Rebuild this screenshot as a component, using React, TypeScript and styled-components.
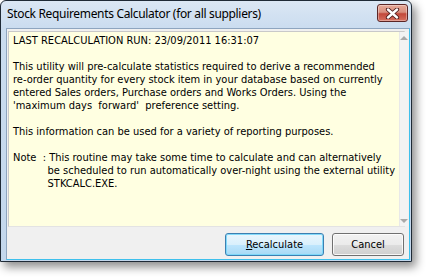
import React from 'react';
import styled, { createGlobalStyle } from 'styled-components';

const GlobalStyle = createGlobalStyle`
  html, body {
    margin: 0;
    padding: 0;
    background: #ffffff;
  }
`;

const Page = styled.div`
  width: 427px;
  height: 279px;
  overflow: hidden;
`;

const Window = styled.div`
  width: 412px;
  height: 262px;
  box-sizing: border-box;
  display: flex;
  flex-direction: column;
  border: 1px solid #1f2a36;
  border-radius: 6px 6px 0 0;
  padding: 0 1px 1px 5px;
  background: linear-gradient(to bottom, #dbe7f4 0px, #cadcef 28px, #c3d7ec 100%);
  box-shadow: 4px 5px 10px rgba(0, 0, 0, 0.45);
`;

const TitleBar = styled.div`
  height: 27px;
  display: flex;
  align-items: center;
  justify-content: space-between;
  flex-shrink: 0;
`;

const Title = styled.div`
  font-family: 'Noto Sans', 'Open Sans', sans-serif;
  font-size: 12px;
  letter-spacing: -0.33px;
  color: #000;
  padding-left: 1px;
  margin-top: -2px;
`;

const CloseButton = styled.div`
  width: 29px;
  height: 16px;
  margin-right: 2px;
  margin-top: -3px;
  border: 1px solid #5b2626;
  border-radius: 3px;
  display: flex;
  align-items: center;
  justify-content: center;
  background: linear-gradient(to bottom, #e6a999 0%, #d88f7e 45%, #c2483a 55%, #d6705f 100%);
  box-shadow: inset 0 0 0 1px rgba(255, 255, 255, 0.35);
`;

const Client = styled.div`
  flex: 1;
  display: flex;
  flex-direction: column;
  background: #f0f0f0;
  border: 1px solid #8ea5bf;
  border-right-color: #3ec0ec;
  border-bottom-color: #3ec0ec;
  padding: 2px 4px 0 1px;
`;

const Memo = styled.div`
  height: 196px;
  box-sizing: border-box;
  display: flex;
  background: #ffffe1;
  border: 1px solid #c9c9c9;
  border-right-color: #e3e3e3;
  border-bottom-color: #e3e3e3;
`;

const MemoText = styled.div`
  flex: 1;
  padding: 2px 4px 0 4px;
  font-family: 'DejaVu Sans Condensed', 'DejaVu Sans', sans-serif;
  font-size: 11px;
  line-height: 13px;
  color: #000;
  white-space: pre;
`;

const ScrollBar = styled.div`
  width: 16px;
  display: flex;
  flex-direction: column;
  justify-content: space-between;
  align-items: center;
  background: #f3f3f3;
  border-left: 1px solid #e8e8e8;
  padding: 4px 0 3px;
`;

const Arrow = styled.div<{ $down?: boolean }>`
  width: 0;
  height: 0;
  border-left: 4px solid transparent;
  border-right: 4px solid transparent;
  ${(p) => (p.$down ? 'border-top: 4px solid #a9a9a9;' : 'border-bottom: 4px solid #a9a9a9;')}
`;

const ButtonRow = styled.div`
  display: flex;
  justify-content: flex-end;
  gap: 8px;
  margin-top: 6px;
  padding-right: 1px;
`;

const Button = styled.div<{ $default?: boolean; $width: number }>`
  width: ${(p) => p.$width}px;
  height: 23px;
  box-sizing: border-box;
  display: flex;
  align-items: center;
  justify-content: center;
  border-radius: 3px;
  font-family: 'DejaVu Sans Condensed', 'DejaVu Sans', sans-serif;
  font-size: 11px;
  color: #000;
  border: 1px solid ${(p) => (p.$default ? '#3c7fb1' : '#707070')};
  background: ${(p) =>
    p.$default
      ? 'linear-gradient(to bottom, #eaf6fd 0%, #d9f0fc 50%, #bee6fd 51%, #a7d9f5 100%)'
      : 'linear-gradient(to bottom, #f2f2f2 0%, #ebebeb 50%, #dddddd 51%, #cfcfcf 100%)'};
  box-shadow: inset 0 0 0 1px
    ${(p) => (p.$default ? 'rgba(120, 215, 250, 0.9)' : 'rgba(255, 255, 255, 0.8)')};

  u {
    text-decoration: underline;
  }
`;

const memo = `LAST RECALCULATION RUN: 23/09/2011 16:31:07

This utility will pre-calculate statistics required to derive a recommended
re-order quantity for every stock item in your database based on currently
entered Sales orders, Purchase orders and Works Orders. Using the
'maximum days  forward'  preference setting.

This information can be used for a variety of reporting purposes.

Note  : This routine may take some time to calculate and can alternatively
           be scheduled to run automatically over-night using the external utility
           STKCALC.EXE.`;

export default function App() {
  return (
    <Page>
      <GlobalStyle />
      <Window>
        <TitleBar>
          <Title>Stock Requirements Calculator (for all suppliers)</Title>
          <CloseButton>
            <svg width="15" height="11" viewBox="0 0 15 11">
              <path d="M3 1.5 L12 9.5 M12 1.5 L3 9.5" stroke="#4a1a1a" strokeWidth="4.2" strokeLinecap="round" />
              <path d="M3 1.5 L12 9.5 M12 1.5 L3 9.5" stroke="#ffffff" strokeWidth="2.4" strokeLinecap="round" />
            </svg>
          </CloseButton>
        </TitleBar>
        <Client>
          <Memo>
            <MemoText>{memo}</MemoText>
            <ScrollBar>
              <Arrow />
              <Arrow $down />
            </ScrollBar>
          </Memo>
          <ButtonRow>
            <Button $default $width={99}>
              <span>
                <u>R</u>ecalculate
              </span>
            </Button>
            <Button $width={72}>Cancel</Button>
          </ButtonRow>
        </Client>
      </Window>
    </Page>
  );
}
